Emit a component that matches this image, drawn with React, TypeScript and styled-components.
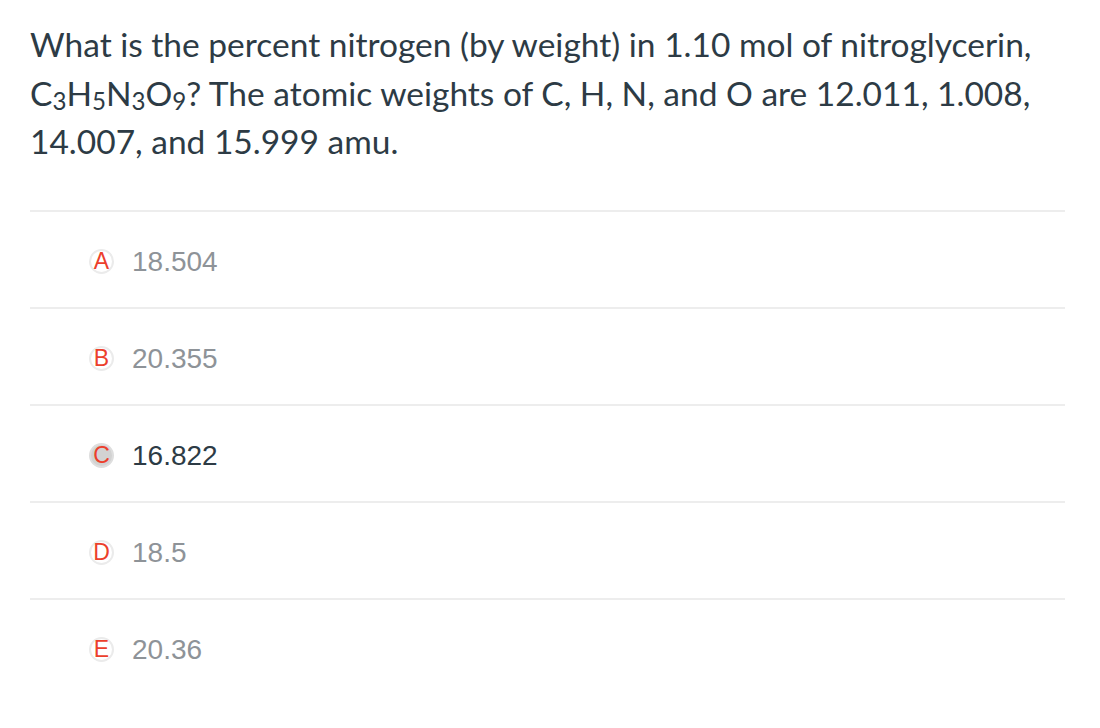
import React from 'react';
import styled, { createGlobalStyle } from 'styled-components';

const Global = createGlobalStyle`
	html, body {
		margin: 0;
		padding: 0;
		background: #ffffff;
	}
`;

const Page = styled.div`
	padding: 20px 35px 0 30px;
	width: 1100px;
	box-sizing: border-box;
`;

const Question = styled.p`
	margin: 0 0 44px 0;
	font-family: 'Lato', sans-serif;
	font-size: 33.5px;
	line-height: 48.5px;
	color: #2d3b45;

	sub {
		font-size: 0.72em;
		vertical-align: -0.18em;
		line-height: 1;
	}
`;

const List = styled.div`
	display: flex;
	flex-direction: column;
`;

const Row = styled.div`
	display: flex;
	align-items: center;
	height: 97px;
	box-sizing: border-box;
	border-top: 2px solid #ededed;
	padding: 5px 0 0 59px;
`;

const Badge = styled.span<{ selected?: boolean }>`
	display: flex;
	align-items: center;
	justify-content: center;
	width: 21px;
	height: 21px;
	border-radius: 50%;
	border: 2px solid ${(p) => (p.selected ? '#dedede' : '#ebebeb')};
	background: ${(p) => (p.selected ? '#d2d2d2' : '#ffffff')};
	color: #ec3f2c;
	font-family: 'Liberation Sans', Arial, sans-serif;
	font-size: 23px;
	line-height: 1;
	margin-right: 18px;
`;

const Value = styled.span<{ selected?: boolean }>`
	font-family: 'Liberation Sans', Arial, sans-serif;
	font-size: 28px;
	color: ${(p) => (p.selected ? '#2d3b45' : '#8e9398')};
`;

const answers = [
	{ letter: 'A', value: '18.504' },
	{ letter: 'B', value: '20.355' },
	{ letter: 'C', value: '16.822', selected: true },
	{ letter: 'D', value: '18.5' },
	{ letter: 'E', value: '20.36' },
];

export default function App() {
	return (
		<Page>
			<Global />
			<Question>
				What is the percent nitrogen (by weight) in 1.10 mol of nitroglycerin, C<sub>3</sub>H<sub>5</sub>N
				<sub>3</sub>O<sub>9</sub>? The atomic weights of C, H, N, and O are 12.011, 1.008, 14.007, and 15.999 amu.
			</Question>
			<List>
				{answers.map((a) => (
					<Row key={a.letter}>
						<Badge selected={a.selected}>{a.letter}</Badge>
						<Value selected={a.selected}>{a.value}</Value>
					</Row>
				))}
			</List>
		</Page>
	);
}
